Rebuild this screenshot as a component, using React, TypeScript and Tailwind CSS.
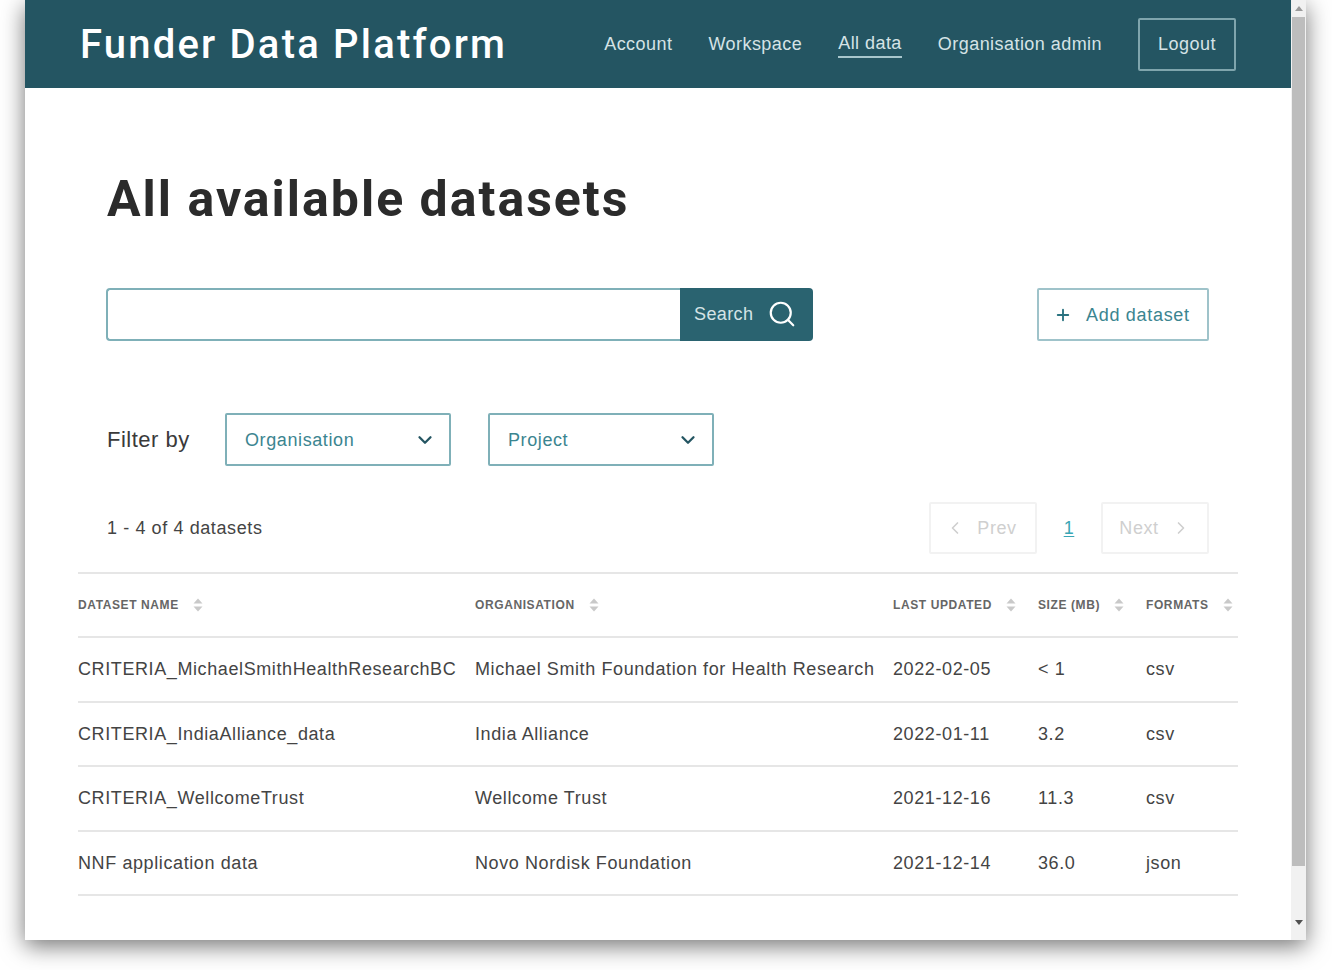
import { ChevronDown, ChevronLeft, ChevronRight, Plus, Search } from 'lucide-react'

const columns = [
  { label: 'DATASET NAME', width: 'w-[397px]' },
  { label: 'ORGANISATION', width: 'w-[418px]' },
  { label: 'LAST UPDATED', width: 'w-[145px]' },
  { label: 'SIZE (MB)', width: 'w-[108px]' },
  { label: 'FORMATS', width: 'w-[92px]' },
]

const datasets = [
  ['CRITERIA_MichaelSmithHealthResearchBC', 'Michael Smith Foundation for Health Research', '2022-02-05', '< 1', 'csv'],
  ['CRITERIA_IndiaAlliance_data', 'India Alliance', '2022-01-11', '3.2', 'csv'],
  ['CRITERIA_WellcomeTrust', 'Wellcome Trust', '2021-12-16', '11.3', 'csv'],
  ['NNF application data', 'Novo Nordisk Foundation', '2021-12-14', '36.0', 'json'],
]

function SortIcon() {
  return (
    <svg width="10" height="14" viewBox="0 0 10 14" className="ml-[14px] shrink-0 text-[#c9c9c9]" fill="currentColor">
      <path d="M5 0.5 9.5 5.5H0.5Z" />
      <path d="M5 13.5 0.5 8.5H9.5Z" />
    </svg>
  )
}

function FilterSelect({ label }: { label: string }) {
  return (
    <button className="flex h-[53px] w-[226px] items-center justify-between rounded-[2px] border-2 border-[#7fb0b8] pl-[18px] pr-[13px] text-lg tracking-[0.6px] text-[#3b8590]">
      {label}
      <ChevronDown className="h-[22px] w-[22px] text-[#245562]" strokeWidth={2.5} />
    </button>
  )
}

export default function App() {
  return (
    <div className="h-[970px] bg-white pl-[25px] font-['Liberation_Sans',sans-serif]">
      <div className="flex h-[940px] w-[1281px] shadow-[0_6px_22px_rgba(0,0,0,0.55)]">
        <div className="flex w-[1266px] flex-col bg-white">
          <header className="flex h-[88px] items-center justify-between bg-[#245562] pl-[55px] pr-[55px]">
            <span className="pt-0.5 font-['Roboto',sans-serif] text-[40px] font-medium tracking-[2.2px] text-white">
              Funder Data Platform
            </span>
            <nav className="flex items-center gap-9 text-lg tracking-[0.45px] text-[#d5e3e6]">
              <a>Account</a>
              <a>Workspace</a>
              <a className="border-b-2 border-[#a8c6cc] pb-px leading-6">All data</a>
              <a>Organisation admin</a>
              <a className="flex h-[53px] w-[98px] items-center justify-center rounded-[2px] border-2 border-[#7fa5ad]">
                Logout
              </a>
            </nav>
          </header>

          <main className="flex-1 pl-[53px] pr-[53px]">
            <h1 className="ml-[29px] mt-[77px] font-['Roboto',sans-serif] text-[50px] font-bold leading-[68px] tracking-[2px] text-[#2b2b2b]">
              All available datasets
            </h1>

            <div className="ml-[28px] mr-[29px] mt-[55px] flex h-[53px] justify-between">
              <div className="flex">
                <input className="h-full w-[574px] rounded-l-[4px] border-2 border-r-0 border-[#7fb0b8] bg-white" />
                <button className="flex w-[133px] items-center gap-[14px] rounded-r-[4px] bg-[#2a6370] pb-0.5 pl-[14px] text-lg tracking-[0.4px] text-[#d5e3e6]">
                  Search
                  <Search className="h-[30px] w-[30px] text-white" strokeWidth={1.75} />
                </button>
              </div>
              <button className="flex w-[172px] items-center gap-[14px] rounded-[2px] border-2 border-[#9fc3ca] pl-[15px] text-lg tracking-[0.7px] text-[#3b8590]">
                <Plus className="h-[18px] w-[18px] text-[#2a7380]" strokeWidth={2.5} />
                Add dataset
              </button>
            </div>

            <div className="ml-[28px] mt-[72px] flex items-center">
              <span className="w-[119px] pl-px text-[22px] tracking-[0.5px] text-[#3a3a3a]">Filter by</span>
              <FilterSelect label="Organisation" />
              <div className="w-[37px]" />
              <FilterSelect label="Project" />
            </div>

            <div className="ml-[29px] mr-[29px] mt-[36px] flex h-[52px] items-center justify-between">
              <span className="text-lg tracking-[0.6px] text-[#444]">1 - 4 of 4 datasets</span>
              <div className="flex items-center text-lg tracking-[0.6px] text-[#cfcfcf]">
                <button className="flex h-[52px] w-[108px] items-center justify-center gap-3 rounded-[2px] border-2 border-[#f2f2f2] pr-1">
                  <ChevronLeft className="h-5 w-5" />
                  Prev
                </button>
                <span className="w-[64px] text-center text-[#3aa6b5] underline underline-offset-2">1</span>
                <button className="flex h-[52px] w-[108px] items-center justify-center gap-3 rounded-[2px] border-2 border-[#f2f2f2]">
                  Next
                  <ChevronRight className="h-5 w-5" />
                </button>
              </div>
            </div>

            <table className="mt-[18px] w-[1160px] table-fixed border-collapse text-left">
              <thead>
                <tr className="h-[64px] border-y-2 border-[#e6e6e6]">
                  {columns.map((c) => (
                    <th key={c.label} className={`p-0 text-xs font-bold tracking-[0.6px] text-[#666] ${c.width}`}>
                      <span className="flex items-center">
                        {c.label}
                        <SortIcon />
                      </span>
                    </th>
                  ))}
                </tr>
              </thead>
              <tbody>
                {datasets.map((row) => (
                  <tr key={row[0]} className="h-[64.5px] border-b-2 border-[#e6e6e6]">
                    {row.map((cell, i) => (
                      <td key={i} className="whitespace-nowrap p-0 text-lg tracking-[0.6px] text-[#444]">
                        {cell}
                      </td>
                    ))}
                  </tr>
                ))}
              </tbody>
            </table>
          </main>
        </div>

        <div className="flex w-[15px] flex-col items-center bg-[#f1f1f1]">
          <div className="mt-[6px] h-0 w-0 border-x-[4px] border-b-[5px] border-x-transparent border-b-[#9a9a9a]" />
          <div className="mt-[6px] h-[849px] w-[13px] bg-[#bdbdbd]" />
          <div className="mt-[54px] h-0 w-0 border-x-[4px] border-t-[5px] border-x-transparent border-t-[#505050]" />
        </div>
      </div>
    </div>
  )
}
